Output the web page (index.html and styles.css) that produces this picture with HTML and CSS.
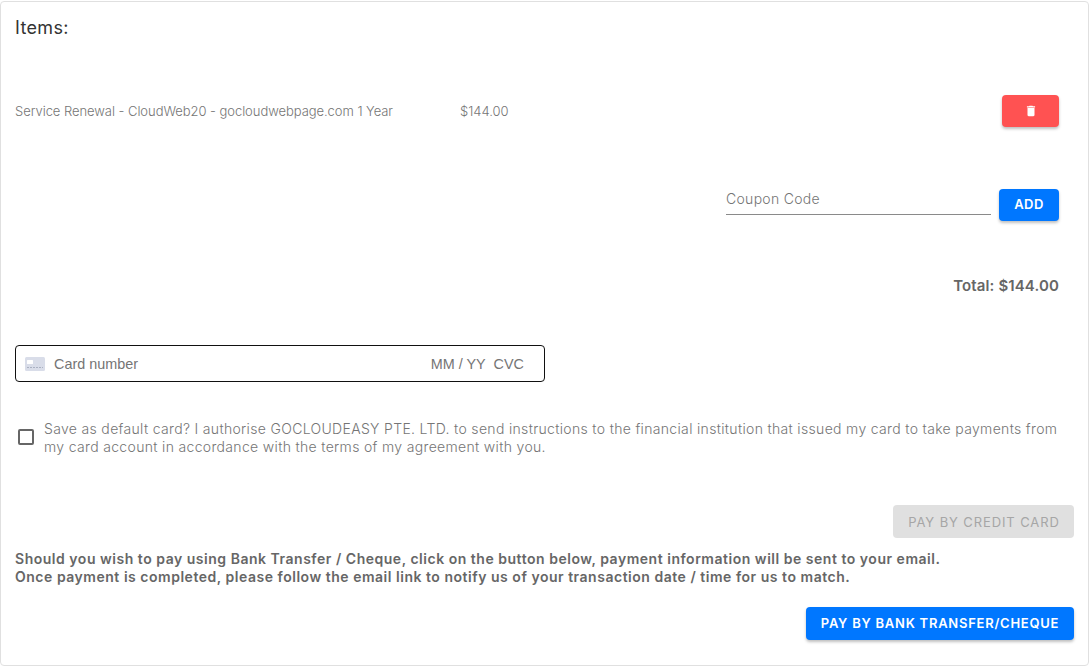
FILE: index.html
```html
<!DOCTYPE html>
<html lang="en">
<head>
<meta charset="utf-8">
<title>Checkout</title>
<link rel="stylesheet" href="styles.css">
</head>
<body>
<main class="card">
  <h2 class="title">Items:</h2>
  <div class="item-row">
    <span class="item-name">Service Renewal - CloudWeb20 - gocloudwebpage.com 1 Year</span>
    <span class="item-price">$144.00</span>
    <button class="btn btn-danger" aria-label="Delete">
      <svg width="14" height="14" viewBox="0 0 24 24" fill="#fff"><path d="M6 19c0 1.1.9 2 2 2h8c1.1 0 2-.9 2-2V7H6v12zM19 4h-3.5l-1-1h-5l-1 1H5v2h14V4z"/></svg>
    </button>
  </div>
  <div class="coupon-row">
    <div class="coupon-input">Coupon Code</div>
    <button class="btn btn-primary btn-add">ADD</button>
  </div>
  <div class="total">Total: $144.00</div>
  <div class="card-field">
    <svg class="card-icon" width="20" height="14" viewBox="0 0 20 14"><rect width="20" height="14" rx="1.5" fill="#d9dde9"/><rect x="2" y="3" width="6" height="4" rx=".5" fill="#fff"/><path d="M2 10.500h16" stroke="#aab1c2" stroke-width="1" stroke-dasharray="2 1"/></svg>
    <span class="card-number">Card number</span>
    <span class="card-exp">MM / YY</span>
    <span class="card-cvc">CVC</span>
  </div>
  <label class="consent">
    <span class="checkbox"></span>
    <span class="consent-text">Save as default card? I authorise GOCLOUDEASY PTE. LTD. to send instructions to the financial institution that issued my card to take payments from my card account in accordance with the terms of my agreement with you.</span>
  </label>
  <div class="actions-credit">
    <button class="btn btn-disabled">PAY BY CREDIT CARD</button>
  </div>
  <p class="notice">Should you wish to pay using Bank Transfer / Cheque, click on the button below, payment information will be sent to your email.<br>Once payment is completed, please follow the email link to notify us of your transaction date / time for us to match.</p>
  <div class="actions-bank">
    <button class="btn btn-primary btn-bank">PAY BY BANK TRANSFER/CHEQUE</button>
  </div>
</main>
</body>
</html>
```
FILE: styles.css
```css
* { box-sizing: border-box; }
html, body { margin: 0; padding: 0; background: #fff; }
body { font-family: Inter, "Liberation Sans", sans-serif; color: #666; height: 668px; overflow: hidden; }
.card {
  margin-top: 1px;
  height: 665px;
  border: 1px solid #e0e0e0;
  border-radius: 4px;
  padding: 0 14px;
  display: flex;
  flex-direction: column;
  position: relative;
}
.title { margin: 14px 0 0; font-size: 18px; font-weight: 400; line-height: 24px; letter-spacing: .35px; color: #333; }
.item-row { display: flex; align-items: center; margin-top: 55px; height: 32px; padding-right: 15px; }
.item-name { width: 445px; font-size: 13px; font-weight: 300; letter-spacing: -.05px; color: #757575; }
.item-price { font-size: 13px; font-weight: 300; color: #757575; }
.btn {
  border: 0;
  border-radius: 4px;
  font-family: inherit;
  font-weight: 600;
  font-size: 13px;
  letter-spacing: .5px;
  display: flex;
  align-items: center;
  justify-content: center;
  padding: 0 0 1px;
  color: #fff;
}
.btn-danger { margin-left: auto; width: 57px; height: 32px; background: #ff5252; box-shadow: 0 2px 3px rgba(0,0,0,.25); }
.btn-primary { background: #0077ff; box-shadow: 0 2px 3px rgba(0,0,0,.25); }
.coupon-row { display: flex; justify-content: flex-end; align-items: flex-start; gap: 8px; margin-top: 62px; padding-right: 15px; }
.coupon-input { width: 265px; height: 26px; border-bottom: 1px solid #8a8a8a; font-size: 14px; font-weight: 300; letter-spacing: .3px; line-height: 20px; color: #757575; }
.btn-add { width: 60px; height: 32px; padding-bottom: 2px; }
.total { margin-top: 55px; padding-right: 15px; text-align: right; font-size: 15px; font-weight: 600; line-height: 20px; letter-spacing: .12px; color: #666; }
.card-field {
  margin-top: 49px;
  width: 530px;
  height: 37px;
  border: 1px solid #111;
  border-radius: 4px;
  display: flex;
  align-items: center;
  padding: 0 20px 0 9px;
  font-family: "Liberation Sans", Arial, sans-serif;
  font-size: 14.400px;
  color: #757575;
}
.card-number { margin-left: 9px; }
.card-exp { margin-left: auto; }
.card-cvc { margin-left: 8px; }
.consent { display: flex; align-items: center; margin-top: 38px; }
.checkbox { flex: none; width: 16px; height: 16px; margin: 0 10px 3px 3px; border: 2px solid #666; border-radius: 2px; }
.consent-text { font-size: 14px; font-weight: 300; line-height: 18px; letter-spacing: .33px; color: #757575; padding-right: 14px; }
.actions-credit { display: flex; justify-content: flex-end; margin-top: 49px; }
.btn-disabled { width: 181px; height: 33px; background: #e0e0e0; color: #a6a6a6; font-weight: 400; letter-spacing: .9px; padding: 0 0 0 1px; }
.notice { margin: 12px 0 0; font-size: 14px; font-weight: 600; line-height: 18px; letter-spacing: .52px; color: #666; }
.actions-bank { display: flex; justify-content: flex-end; margin-top: 21px; }
.btn-bank { width: 268px; height: 33px; letter-spacing: .75px; }
```
